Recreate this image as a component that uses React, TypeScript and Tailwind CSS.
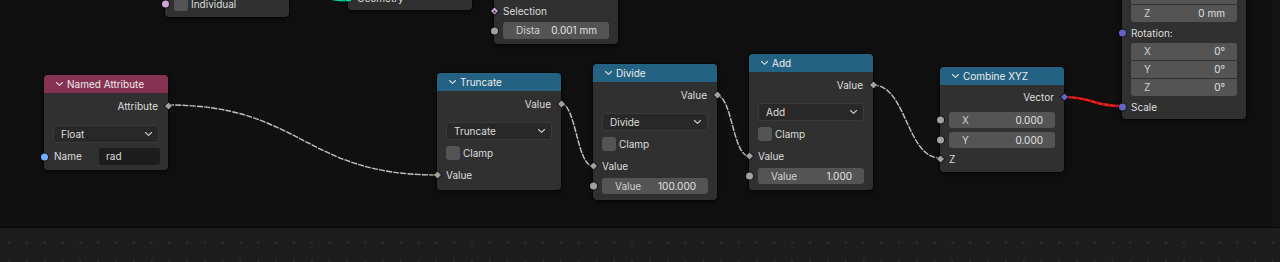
import React from 'react';

type Kind = 'circle' | 'diamond' | 'diamondDot';

function Socket({ kind = 'circle', color = 'bg-[#a1a1a1]', side }: { kind?: Kind; color?: string; side: 'left' | 'right' }) {
  const pos = side === 'left' ? 'left-[-3.5px]' : 'right-[-3.5px]';
  if (kind === 'circle') {
    return <span className={`absolute ${pos} top-1/2 -translate-y-1/2 w-[7px] h-[7px] rounded-full ring-1 ring-black/50 ${color}`} />;
  }
  return (
    <span className={`absolute ${pos} top-1/2 -translate-y-1/2 w-[7px] h-[7px] flex items-center justify-center`}>
      <span className={`w-[5px] h-[5px] rotate-45 ring-1 ring-black/50 flex items-center justify-center ${color}`}>
        {kind === 'diamondDot' && <span className="w-[2px] h-[2px] bg-[#303030]" />}
      </span>
    </span>
  );
}

function Chevron({ className = '' }: { className?: string }) {
  return (
    <svg width="7" height="4" viewBox="0 0 7 4" className={className}>
      <path d="M0.5 0.5 L3.5 3.3 L6.5 0.5" fill="none" stroke="currentColor" strokeWidth="1.1" strokeLinecap="round" strokeLinejoin="round" />
    </svg>
  );
}

function Header({ title, color }: { title: string; color: string }) {
  return (
    <div className={`h-[18px] rounded-t-[4px] flex items-center pl-[12px] gap-[4px] text-[#ececec] ${color}`}>
      <Chevron className="text-[#dcdcdc]" />
      <span>{title}</span>
    </div>
  );
}

function OutRow({ label, kind = 'diamond', color, h = 'h-5' }: { label: string; kind?: Kind; color?: string; h?: string }) {
  return (
    <div className={`relative ${h} flex items-center justify-end pr-[10px]`}>
      <span>{label}</span>
      <Socket kind={kind} color={color} side="right" />
    </div>
  );
}

function InRow({ label, kind = 'diamond', color, h = 'h-5', cls = '' }: { label: string; kind?: Kind; color?: string; h?: string; cls?: string }) {
  return (
    <div className={`relative ${h} flex items-center pl-[9px] ${cls}`}>
      <span>{label}</span>
      <Socket kind={kind} color={color} side="left" />
    </div>
  );
}

function Dropdown({ label, cls = '' }: { label: string; cls?: string }) {
  return (
    <div className={`mx-[9px] h-[18px] rounded-[3px] bg-[#282828] border border-[#3a3a3a] flex items-center justify-between pl-[7px] pr-[6px] ${cls}`}>
      <span>{label}</span>
      <Chevron className="text-[#d0d0d0]" />
    </div>
  );
}

function Check({ label, cls = '' }: { label: string; cls?: string }) {
  return (
    <div className={`h-[14px] flex items-center pl-[9px] gap-[3px] ${cls}`}>
      <span className="w-[14px] h-[14px] rounded-[3px] bg-[#545454]" />
      <span>{label}</span>
    </div>
  );
}

function NumField({ label, value, socket = true, cls = '', h = 'h-[16px]', round = 'rounded-[3px]' }: { label: string; value: string; socket?: boolean; cls?: string; h?: string; round?: string }) {
  return (
    <div className={`relative ${cls}`}>
      <div className={`mx-[9px] ${h} ${round} bg-[#545454] flex items-center justify-between pl-[13px] pr-[12px]`}>
        <span className="text-[#d2d2d2]">{label}</span>
        <span className="text-[#e2e2e2]">{value}</span>
      </div>
      {socket && <Socket kind="circle" side="left" />}
    </div>
  );
}

const nodeCls =
  'absolute w-[124px] rounded-[4px] bg-[#303030] ring-1 ring-black/40 shadow-[0_2px_6px_rgba(0,0,0,0.55)]';

const PINK_HEAD = 'bg-[#873252]';
const BLUE_HEAD = 'bg-[#246283]';

function MathNode({ title, op, value, top, left, withField }: { title: string; op: string; value?: string; top: string; left: string; withField: boolean }) {
  return (
    <div className={`${nodeCls} ${top} ${left} ${withField ? 'pb-[6px]' : 'pb-[5px]'}`}>
      <Header title={title} color={BLUE_HEAD} />
      <div className="pt-[3px]">
        <OutRow label="Value" />
        <Dropdown label={op} cls="mt-[8px]" />
        <Check label="Clamp" cls="mt-[6px]" />
        <InRow label="Value" cls="mt-[5px]" />
        {withField && value && <NumField label="Value" value={value} cls="mt-[2px]" />}
      </div>
    </div>
  );
}

export default function App() {
  const links = [
    'M168,105 C302.5,105 302.5,175 437,175',
    'M560,103 C576.5,103 576.5,166 593,166',
    'M716,95 C732.5,95 732.5,156 749,156',
    'M873,85 C906.5,85 906.5,158 940,158',
  ];
  const red = 'M1064,97 C1092.5,97 1092.5,106 1121,106';

  return (
    <div className="w-[1280px] h-[262px] flex flex-col bg-[#101010] font-['Inter',sans-serif] text-[10px] text-[#dedede] overflow-hidden">
      <div className="flex h-[227px]">
        <div className="relative flex-1 overflow-hidden bg-[#101010]">
          {/* links */}
          <svg className="absolute inset-0" width="1272" height="227">
            <g fill="none" strokeLinecap="round">
              <path d="M250,-30 C299,-30 299,0 348,0" stroke="#0a0a0a" strokeWidth="5" />
              <path d="M250,-30 C299,-30 299,0 348,0" stroke="#00d69a" strokeWidth="3" />
              {links.map((d) => (
                <g key={d}>
                  <path d={d} stroke="#141414" strokeWidth="3" />
                  <path d={d} stroke="#c2c2c2" strokeWidth="1.4" strokeDasharray="6 1.2" strokeLinecap="butt" />
                </g>
              ))}
              <path d={red} stroke="#1a0505" strokeWidth="4.5" />
              <path d={red} stroke="#e42424" strokeWidth="2.6" />
              <path d={red} stroke="#a01616" strokeWidth="2.6" strokeDasharray="1.5 5" strokeLinecap="butt" />
            </g>
          </svg>

          {/* top left node (cut) */}
          <div className={`${nodeCls} top-[-30px] left-[165px] pt-[26px] pb-[5px]`}>
            <div className="relative h-[16px] flex items-center pl-[9px] gap-[3px]">
              <span className="w-[14px] h-[14px] rounded-[3px] bg-[#545454]" />
              <span>Individual</span>
              <Socket kind="circle" color="bg-[#cca6d6]" side="left" />
            </div>
          </div>

          {/* geometry node (cut) */}
          <div className={`${nodeCls} top-[-30px] left-[348px] pt-[19px] pb-[3px]`}>
            <InRow label="Geometry" kind="circle" color="bg-[#00d6a3]" h="h-[18px]" />
          </div>

          {/* selection node (cut) */}
          <div className={`${nodeCls} top-[-20px] left-[494px] pt-[22px] pb-[5px]`}>
            <InRow label="Selection" kind="diamondDot" color="bg-[#cca6d6]" h="h-[18px]" />
            <NumField label="Dista" value="0.001 mm" cls="mt-[2px]" h="h-[17px]" />
          </div>

          {/* Named Attribute */}
          <div className={`${nodeCls} top-[75px] left-[44px] pb-[5px]`}>
            <Header title="Named Attribute" color={PINK_HEAD} />
            <div className="pt-[3px]">
              <OutRow label="Attribute" />
              <Dropdown label="Float" cls="mt-[9px]" />
              <div className="relative mt-[5px] h-[17px] flex items-center">
                <span className="flex-1 pl-[10px]">Name</span>
                <span className="w-[61px] mr-[8px] h-[17px] rounded-[3px] bg-[#1d1d1d] flex items-center pl-[7px]">rad</span>
                <Socket kind="circle" color="bg-[#70b2ff]" side="left" />
              </div>
            </div>
          </div>

          <MathNode title="Truncate" op="Truncate" top="top-[73px]" left="left-[437px]" withField={false} />
          <MathNode title="Divide" op="Divide" value="100.000" top="top-[64px]" left="left-[593px]" withField />
          <MathNode title="Add" op="Add" value="1.000" top="top-[54px]" left="left-[749px]" withField />

          {/* Combine XYZ */}
          <div className={`${nodeCls} top-[67px] left-[940px] pb-[4px]`}>
            <Header title="Combine XYZ" color={BLUE_HEAD} />
            <div className="pt-[2px]">
              <OutRow label="Vector" color="bg-[#6363c7]" />
              <NumField label="X" value="0.000" cls="mt-[5px]" />
              <NumField label="Y" value="0.000" cls="mt-[4px]" />
              <InRow label="Z" h="h-[18px]" cls="mt-[2px]" />
            </div>
          </div>

          {/* transform node (cut) */}
          <div className={`${nodeCls} top-[-35px] left-[1122px] pt-[4px] pb-[3px]`}>
            <div className="flex flex-col gap-[1px]">
              <NumField label="X" value="0 mm" socket={false} h="h-[17px]" round="rounded-t-[3px]" />
              <NumField label="Y" value="0 mm" socket={false} h="h-[17px]" round="rounded-none" />
              <NumField label="Z" value="0 mm" socket={false} h="h-[17px]" round="rounded-b-[3px]" />
            </div>
            <InRow label="Rotation:" kind="circle" color="bg-[#6363c7]" h="h-[18px]" cls="mt-[2px]" />
            <div className="flex flex-col gap-[1px] mt-[1px]">
              <NumField label="X" value="0°" socket={false} h="h-[17px]" round="rounded-t-[3px]" />
              <NumField label="Y" value="0°" socket={false} h="h-[17px]" round="rounded-none" />
              <NumField label="Z" value="0°" socket={false} h="h-[17px]" round="rounded-b-[3px]" />
            </div>
            <InRow label="Scale" kind="circle" color="bg-[#6363c7]" h="h-[18px]" cls="mt-[2px]" />
          </div>
        </div>
        <div className="w-[8px] bg-[#131313]" />
      </div>
      <div className="h-[1px] bg-[#0a0a0a]" />
      <div className="flex-1 bg-[#1d1d1d] bg-[radial-gradient(circle,#303030_1px,transparent_1.4px)] bg-[length:17.8px_18px] bg-[position:0.3px_5.7px]" />
    </div>
  );
}
